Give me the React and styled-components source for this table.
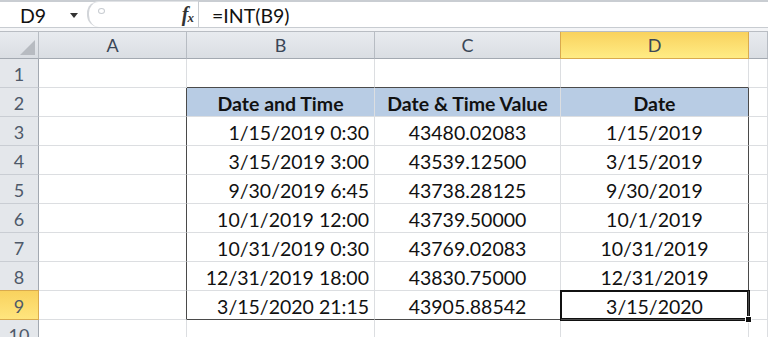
import React from "react";
import styled, { createGlobalStyle, css } from "styled-components";

const Global = createGlobalStyle`
  html, body { margin: 0; padding: 0; background: #fff; overflow: hidden; }
  body { font-family: Lato, "Open Sans", "Liberation Sans", sans-serif; }
`;

const Page = styled.div`
  width: 768px;
  height: 337px;
  overflow: hidden;
  display: flex;
  flex-direction: column;
  background: #fff;
`;

const FormulaBar = styled.div`
  height: 28px;
  flex: none;
  display: flex;
  border-top: 2px solid #c9cdd2;
  border-bottom: 1px solid #c8ccd1;
  box-sizing: border-box;
  font-size: 19.5px;
  color: #111;
`;

const NameBox = styled.div`
  width: 87px;
  display: flex;
  align-items: center;
  justify-content: space-between;
  padding: 1px 9px 0 20px;
  box-sizing: border-box;
`;

const DropArrow = styled.span`
  width: 0;
  height: 0;
  border-left: 4px solid transparent;
  border-right: 4px solid transparent;
  border-top: 5px solid #333;
`;

const Splitter = styled.div`
  width: 111px;
  display: flex;
  align-items: center;
  justify-content: space-between;
  padding: 0 5px 0 9px;
  box-sizing: border-box;
  border-left: 2px solid #d2d5d9;
  border-top: 1px solid #e0e2e5;
  border-radius: 12px 0 0 12px;
  margin-top: -1px;
`;

const Dot = styled.span`
  width: 5px;
  height: 4px;
  border-radius: 50%;
  border: 1px solid #c8ccd1;
  margin-top: -7px;
`;

const Fx = styled.span`
  font-family: "Liberation Serif", serif;
  font-style: italic;
  font-weight: bold;
  font-size: 20px;
  color: #333;
  letter-spacing: -1px;
  & sub { font-size: 13px; vertical-align: -1px; }
`;

const FormulaInput = styled.div`
  flex: 1;
  border-left: 1px solid #c8ccd1;
  display: flex;
  align-items: center;
  padding: 1px 0 0 13px;
`;

const Gap = styled.div`
  height: 3px;
  flex: none;
  background: #f4f5f7;
  border-bottom: 1px solid #b9bdc3;
`;

const Grid = styled.div`
  display: grid;
  grid-template-columns: 39px 148px 188px 186px 188px 1fr;
  grid-template-rows: 27px repeat(10, 29px);
  font-size: 19.5px;
`;

const ColHead = styled.div`
  display: flex;
  align-items: center;
  justify-content: center;
  color: #3b4656;
  font-size: 18px;
  box-sizing: border-box;
  border-right: 1px solid #b7bcc3;
  border-bottom: 1px solid #a3a9b1;
  background: linear-gradient(#e8ebef, #dadee3);
  ${(p) =>
    p.$active &&
    css`
      background: linear-gradient(#f9d25e, #ffec85);
      border-right-color: #d9aa4e;
      border-bottom-color: #d9aa4e;
      border-left: 1px solid #d9aa4e;
      margin-left: -1px;
    `}
`;

const Corner = styled(ColHead)`
  position: relative;
  &::after {
    content: "";
    position: absolute;
    right: 3px;
    bottom: 3px;
    width: 0;
    height: 0;
    border-left: 15px solid transparent;
    border-bottom: 15px solid #b7bbc1;
  }
`;

const RowHead = styled.div`
  display: flex;
  align-items: center;
  justify-content: center;
  color: #4e5969;
  font-size: 18px;
  padding-top: 2px;
  box-sizing: border-box;
  background: #e4e7eb;
  border-right: 1px solid #a3a9b1;
  border-bottom: 1px solid #c9cdd3;
  ${(p) =>
    p.$active &&
    css`
      background: linear-gradient(#f9d25e, #ffe57e);
      border-right-color: #d9aa4e;
      border-bottom-color: #d9aa4e;
      border-top: 1px solid #d9aa4e;
      margin-top: -1px;
    `}
`;

const Cell = styled.div`
  position: relative;
  display: flex;
  align-items: center;
  justify-content: ${(p) => (p.$align === "right" ? "flex-end" : p.$align === "center" ? "center" : "flex-start")};
  padding: 3px 5px 0;
  box-sizing: border-box;
  color: #111;
  white-space: nowrap;
  border-right: 1px solid ${(p) => (p.$edgeRight ? "#4a4a4a" : "#dcdee1")};
  border-bottom: 1px solid ${(p) => (p.$edgeBottom ? "#4a4a4a" : "#dcdee1")};
  font-weight: ${(p) => (p.$bold ? 700 : 400)};
  background: ${(p) => (p.$header ? "#b8cce4" : "#fff")};
  ${(p) =>
    p.$selected &&
    css`
      box-shadow: 0 0 0 1px #111, inset 0 0 0 1px #111;
      z-index: 1;
    `}
`;

const FillHandle = styled.span`
  position: absolute;
  right: -4px;
  bottom: -4px;
  width: 5px;
  height: 5px;
  background: #111;
  border: 1px solid #fff;
  z-index: 2;
`;

const rows = [
  ["Date and Time", "Date & Time Value", "Date"],
  ["1/15/2019 0:30", "43480.02083", "1/15/2019"],
  ["3/15/2019 3:00", "43539.12500", "3/15/2019"],
  ["9/30/2019 6:45", "43738.28125", "9/30/2019"],
  ["10/1/2019 12:00", "43739.50000", "10/1/2019"],
  ["10/31/2019 0:30", "43769.02083", "10/31/2019"],
  ["12/31/2019 18:00", "43830.75000", "12/31/2019"],
  ["3/15/2020 21:15", "43905.88542", "3/15/2020"],
];

export default function App() {
  const cols = ["A", "B", "C", "D"];
  const gridRows = [];
  for (let r = 1; r <= 10; r++) {
    const data = r >= 2 && r <= 9 ? rows[r - 2] : null;
    const inTable = !!data;
    const above = r === 1;
    gridRows.push(
      <React.Fragment key={r}>
        <RowHead $active={r === 9}>{r}</RowHead>
        <Cell $edgeRight={inTable} />
        <Cell
          $align={r === 2 ? "center" : "right"}
          $bold={r === 2}
          $header={r === 2}
          $edgeBottom={above || r === 9}
        >
          {data && data[0]}
        </Cell>
        <Cell $align="center" $bold={r === 2} $header={r === 2} $edgeBottom={above || r === 9}>
          {data && data[1]}
        </Cell>
        <Cell
          $align="center"
          $bold={r === 2}
          $header={r === 2}
          $edgeBottom={above || r === 9}
          $edgeRight={inTable}
          $selected={r === 9}
        >
          {data && data[2]}
          {r === 9 && <FillHandle />}
        </Cell>
        <Cell />
      </React.Fragment>
    );
  }
  return (
    <Page>
      <Global />
      <FormulaBar>
        <NameBox>
          <span>D9</span>
          <DropArrow />
        </NameBox>
        <Splitter>
          <Dot />
          <Fx>
            f<sub>x</sub>
          </Fx>
        </Splitter>
        <FormulaInput>=INT(B9)</FormulaInput>
      </FormulaBar>
      <Gap />
      <Grid>
        <Corner />
        {cols.map((c) => (
          <ColHead key={c} $active={c === "D"}>
            {c}
          </ColHead>
        ))}
        <ColHead />
        {gridRows}
      </Grid>
    </Page>
  );
}
